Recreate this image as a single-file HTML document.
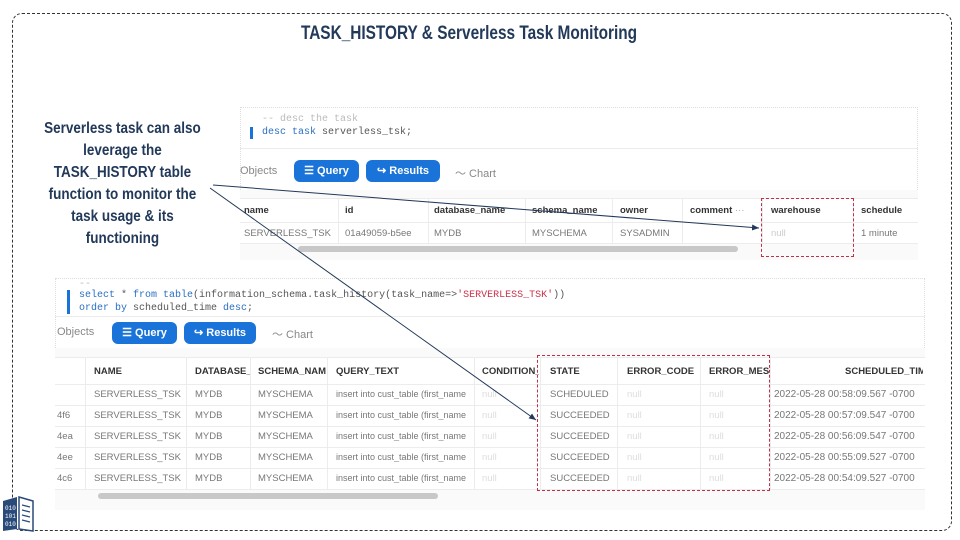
<!DOCTYPE html>
<html><head><meta charset="utf-8"><style>
*{margin:0;padding:0;box-sizing:border-box}
body{width:960px;height:540px;background:#fff;position:relative;overflow:hidden;font-family:"Liberation Sans",sans-serif}
.abs{position:absolute}
.cond{font-family:"Liberation Sans",sans-serif;font-weight:bold;color:#22395a;white-space:nowrap}
.mono{font-family:"Liberation Mono",monospace;font-size:10px;white-space:nowrap}
.btn{position:absolute;background:#1a73d9;color:#fff;border-radius:6px;font-size:11px;font-weight:bold;line-height:22px;text-align:center}
.cell{position:absolute;font-size:9.5px;color:#777;white-space:nowrap;overflow:hidden}
.hd{color:#333;font-weight:bold}
.vl{position:absolute;width:1px;background:#ececec}
.hl{position:absolute;height:1px;background:#ececec}
</style></head><body>
<div class="abs" style="left:12px;top:13px;width:940px;height:518px;border:1px dashed #333;border-radius:10px"></div>
<div class="abs cond" style="left:0;width:938px;top:23px;text-align:center;font-size:19px;transform:scaleX(0.81);transform-origin:469px 0">TASK_HISTORY &amp; Serverless Task Monitoring</div>
<div class="abs cond" style="left:0;width:245px;top:118px;text-align:center;font-size:15.5px;line-height:22px;transform:scaleX(0.87);transform-origin:122px 0">Serverless task can also<br>leverage the<br>TASK_HISTORY table<br>function to monitor the<br>task usage &amp; its<br>functioning</div>

<!-- top screenshot -->
<div class="abs" style="left:240px;top:107px;width:678px;height:153px;border:1px dotted #ddd;background:#fff"></div>
<div class="abs mono" style="left:262px;top:114px;color:#bbb">-- desc the task</div>
<div class="abs" style="left:250px;top:127px;width:3px;height:12px;background:#1a73d9"></div>
<div class="abs mono" style="left:262px;top:127px;color:#555"><span style="color:#2a6fc4">desc task</span> serverless_tsk;</div>
<div class="hl" style="left:240px;top:148px;width:678px"></div>
<div class="abs" style="left:240px;top:165px;font-size:11px;color:#888">Objects</div>
<div class="btn" style="left:294px;top:160px;width:65px">☰ Query</div>
<div class="btn" style="left:366px;top:160px;width:74px">↪ Results</div>
<div class="abs" style="left:455px;top:165px;font-size:11px;color:#888">〜 Chart</div>
<div class="abs" style="left:240px;top:190px;width:678px;height:70px;background:#fafafa"></div>
<div class="abs" style="left:240px;top:198px;width:678px;height:46px;background:#fff;border-top:1px solid #ececec"></div>
<div class="hl" style="left:240px;top:222px;width:678px"></div>
<div class="hl" style="left:240px;top:243px;width:678px"></div>
<div class="abs" style="left:298px;top:246px;width:440px;height:6px;background:#c8c8c8;border-radius:3px"></div>
<div class="cell hd" style="left:244px;top:205px">name</div><div class="cell" style="left:244px;top:228px">SERVERLESS_TSK</div>
<div class="vl" style="left:338px;top:198px;height:45px"></div>
<div class="cell hd" style="left:345px;top:205px">id</div><div class="cell" style="left:345px;top:228px;width:84px">01a49059-b5ee</div>
<div class="vl" style="left:428px;top:198px;height:45px"></div>
<div class="cell hd" style="left:434px;top:205px">database_name</div><div class="cell" style="left:434px;top:228px">MYDB</div>
<div class="vl" style="left:525px;top:198px;height:45px"></div>
<div class="cell hd" style="left:532px;top:205px">schema_name</div><div class="cell" style="left:532px;top:228px">MYSCHEMA</div>
<div class="vl" style="left:612px;top:198px;height:45px"></div>
<div class="cell hd" style="left:620px;top:205px">owner</div><div class="cell" style="left:620px;top:228px">SYSADMIN</div>
<div class="vl" style="left:682px;top:198px;height:45px"></div>
<div class="cell hd" style="left:690px;top:205px">comment <span style="color:#aaa;font-weight:normal">···</span></div>
<div class="vl" style="left:762px;top:198px;height:45px"></div>
<div class="cell hd" style="left:771px;top:205px">warehouse</div><div class="cell" style="left:771px;top:228px;color:#ccc">null</div>
<div class="vl" style="left:853px;top:198px;height:45px"></div>
<div class="cell hd" style="left:861px;top:205px">schedule</div><div class="cell" style="left:861px;top:228px">1 minute</div>
<div class="abs" style="left:761px;top:198px;width:93px;height:59px;border:1px dashed #c0304a"></div>

<!-- bottom screenshot -->
<div class="abs" style="left:55px;top:278px;width:870px;height:232px;border:1px dotted #ddd;background:#fff"></div>
<div class="abs mono" style="left:79px;top:279px;color:#bbb">--</div>
<div class="abs" style="left:67px;top:290px;width:3px;height:24px;background:#1a73d9"></div>
<div class="abs mono" style="left:79px;top:290px;color:#555"><span style="color:#2a6fc4">select</span> * <span style="color:#2a6fc4">from table</span>(information_schema.task_history(task_name=&gt;<span style="color:#c8324a">'SERVERLESS_TSK'</span>))</div>
<div class="abs mono" style="left:79px;top:303px;color:#555"><span style="color:#2a6fc4">order by</span> scheduled_time <span style="color:#2a6fc4">desc</span>;</div>
<div class="hl" style="left:55px;top:316px;width:870px"></div>
<div class="abs" style="left:57px;top:326px;font-size:11px;color:#888">Objects</div>
<div class="btn" style="left:112px;top:322px;width:65px">☰ Query</div>
<div class="btn" style="left:184px;top:322px;width:72px">↪ Results</div>
<div class="abs" style="left:272px;top:326px;font-size:11px;color:#888">〜 Chart</div>
<div class="abs" style="left:55px;top:348px;width:870px;height:162px;background:#fafafa"></div>
<div class="abs" style="left:55px;top:357px;width:870px;height:133px;background:#fff;border-top:1px solid #ececec"></div>
<div class="hl" style="left:55px;top:384px;width:870px"></div>
<div class="hl" style="left:55px;top:405px;width:870px"></div>
<div class="hl" style="left:55px;top:426px;width:870px"></div>
<div class="hl" style="left:55px;top:447px;width:870px"></div>
<div class="hl" style="left:55px;top:468px;width:870px"></div>
<div class="hl" style="left:55px;top:489px;width:870px"></div>
<div class="abs" style="left:98px;top:493px;width:340px;height:6px;background:#c8c8c8;border-radius:3px"></div>
<div class="vl" style="left:85px;top:357px;height:132px"></div>
<div class="vl" style="left:186px;top:357px;height:132px"></div>
<div class="vl" style="left:250px;top:357px;height:132px"></div>
<div class="vl" style="left:327px;top:357px;height:132px"></div>
<div class="vl" style="left:474px;top:357px;height:132px"></div>
<div class="vl" style="left:540px;top:357px;height:132px"></div>
<div class="vl" style="left:617px;top:357px;height:132px"></div>
<div class="vl" style="left:700px;top:357px;height:132px"></div>
<div class="vl" style="left:770px;top:357px;height:132px"></div>
<div class="cell hd" style="left:94px;top:366px">NAME</div>
<div class="cell hd" style="left:195px;top:366px;width:55px">DATABASE_</div>
<div class="cell hd" style="left:258px;top:366px;width:68px">SCHEMA_NAM</div>
<div class="cell hd" style="left:336px;top:366px">QUERY_TEXT</div>
<div class="cell hd" style="left:482px;top:366px;width:57px">CONDITION_</div>
<div class="cell hd" style="left:550px;top:366px">STATE</div>
<div class="cell hd" style="left:627px;top:366px">ERROR_CODE</div>
<div class="cell hd" style="left:709px;top:366px;width:60px">ERROR_MES</div>
<div class="cell hd" style="left:845px;top:366px;width:78px">SCHEDULED_TIM</div>

<div class="cell" style="left:57px;top:410px">4f6</div>
<div class="cell" style="left:57px;top:431px">4ea</div>
<div class="cell" style="left:57px;top:452px">4ee</div>
<div class="cell" style="left:57px;top:473px">4c6</div>

<div class="cell" style="left:94px;top:389px">SERVERLESS_TSK</div><div class="cell" style="left:94px;top:410px">SERVERLESS_TSK</div><div class="cell" style="left:94px;top:431px">SERVERLESS_TSK</div><div class="cell" style="left:94px;top:452px">SERVERLESS_TSK</div><div class="cell" style="left:94px;top:473px">SERVERLESS_TSK</div>
<div class="cell" style="left:195px;top:389px">MYDB</div><div class="cell" style="left:195px;top:410px">MYDB</div><div class="cell" style="left:195px;top:431px">MYDB</div><div class="cell" style="left:195px;top:452px">MYDB</div><div class="cell" style="left:195px;top:473px">MYDB</div>
<div class="cell" style="left:258px;top:389px">MYSCHEMA</div><div class="cell" style="left:258px;top:410px">MYSCHEMA</div><div class="cell" style="left:258px;top:431px">MYSCHEMA</div><div class="cell" style="left:258px;top:452px">MYSCHEMA</div><div class="cell" style="left:258px;top:473px">MYSCHEMA</div>
<div class="cell" style="left:336px;top:389px;width:137px;font-size:9px">insert into cust_table (first_name</div><div class="cell" style="left:336px;top:410px;width:137px;font-size:9px">insert into cust_table (first_name</div><div class="cell" style="left:336px;top:431px;width:137px;font-size:9px">insert into cust_table (first_name</div><div class="cell" style="left:336px;top:452px;width:137px;font-size:9px">insert into cust_table (first_name</div><div class="cell" style="left:336px;top:473px;width:137px;font-size:9px">insert into cust_table (first_name</div>
<div class="cell" style="left:482px;top:389px;color:#ddd">null</div><div class="cell" style="left:482px;top:410px;color:#ddd">null</div><div class="cell" style="left:482px;top:431px;color:#ddd">null</div><div class="cell" style="left:482px;top:452px;color:#ddd">null</div><div class="cell" style="left:482px;top:473px;color:#ddd">null</div>
<div class="cell" style="left:550px;top:389px">SCHEDULED</div><div class="cell" style="left:550px;top:410px">SUCCEEDED</div><div class="cell" style="left:550px;top:431px">SUCCEEDED</div><div class="cell" style="left:550px;top:452px">SUCCEEDED</div><div class="cell" style="left:550px;top:473px">SUCCEEDED</div>
<div class="cell" style="left:627px;top:389px;color:#ddd">null</div><div class="cell" style="left:627px;top:410px;color:#ddd">null</div><div class="cell" style="left:627px;top:431px;color:#ddd">null</div><div class="cell" style="left:627px;top:452px;color:#ddd">null</div><div class="cell" style="left:627px;top:473px;color:#ddd">null</div>
<div class="cell" style="left:709px;top:389px;color:#ddd">null</div><div class="cell" style="left:709px;top:410px;color:#ddd">null</div><div class="cell" style="left:709px;top:431px;color:#ddd">null</div><div class="cell" style="left:709px;top:452px;color:#ddd">null</div><div class="cell" style="left:709px;top:473px;color:#ddd">null</div>
<div class="cell" style="left:774px;top:389px;width:150px;font-size:10px">2022-05-28 00:58:09.567 -0700</div><div class="cell" style="left:774px;top:410px;width:150px;font-size:10px">2022-05-28 00:57:09.547 -0700</div><div class="cell" style="left:774px;top:431px;width:150px;font-size:10px">2022-05-28 00:56:09.547 -0700</div><div class="cell" style="left:774px;top:452px;width:150px;font-size:10px">2022-05-28 00:55:09.527 -0700</div><div class="cell" style="left:774px;top:473px;width:150px;font-size:10px">2022-05-28 00:54:09.527 -0700</div>
<div class="abs" style="left:537px;top:355px;width:233px;height:136px;border:1px dashed #c0304a"></div>

<svg class="abs" style="left:0;top:0" width="960" height="540">
<defs><marker id="a" markerWidth="8" markerHeight="8" refX="7" refY="4" orient="auto"><path d="M0,1 L7,4 L0,7 Z" fill="#22395a"/></marker></defs>
<line x1="213" y1="185" x2="759" y2="228" stroke="#22395a" stroke-width="1" marker-end="url(#a)"/>
<line x1="210" y1="188" x2="536" y2="420" stroke="#22395a" stroke-width="1" marker-end="url(#a)"/>
<g transform="translate(3,497)">
<path d="M0,4 L14,0 L14,32 L0,34 Z" fill="#2a4a7a"/>
<path d="M16,0 L30,4 L30,34 L16,32 Z" fill="#fff" stroke="#2a4a7a" stroke-width="1.5"/>
<path d="M19,8 L27,10 M19,13 L27,15 M19,18 L27,20 M19,23 L27,25" stroke="#2a4a7a" stroke-width="1.2"/>
<text x="2" y="13" font-size="6" fill="#fff" font-family="Liberation Mono">010</text>
<text x="2" y="21" font-size="6" fill="#fff" font-family="Liberation Mono">101</text>
<text x="2" y="29" font-size="6" fill="#fff" font-family="Liberation Mono">010</text>
</g>
</svg>
</body></html>
